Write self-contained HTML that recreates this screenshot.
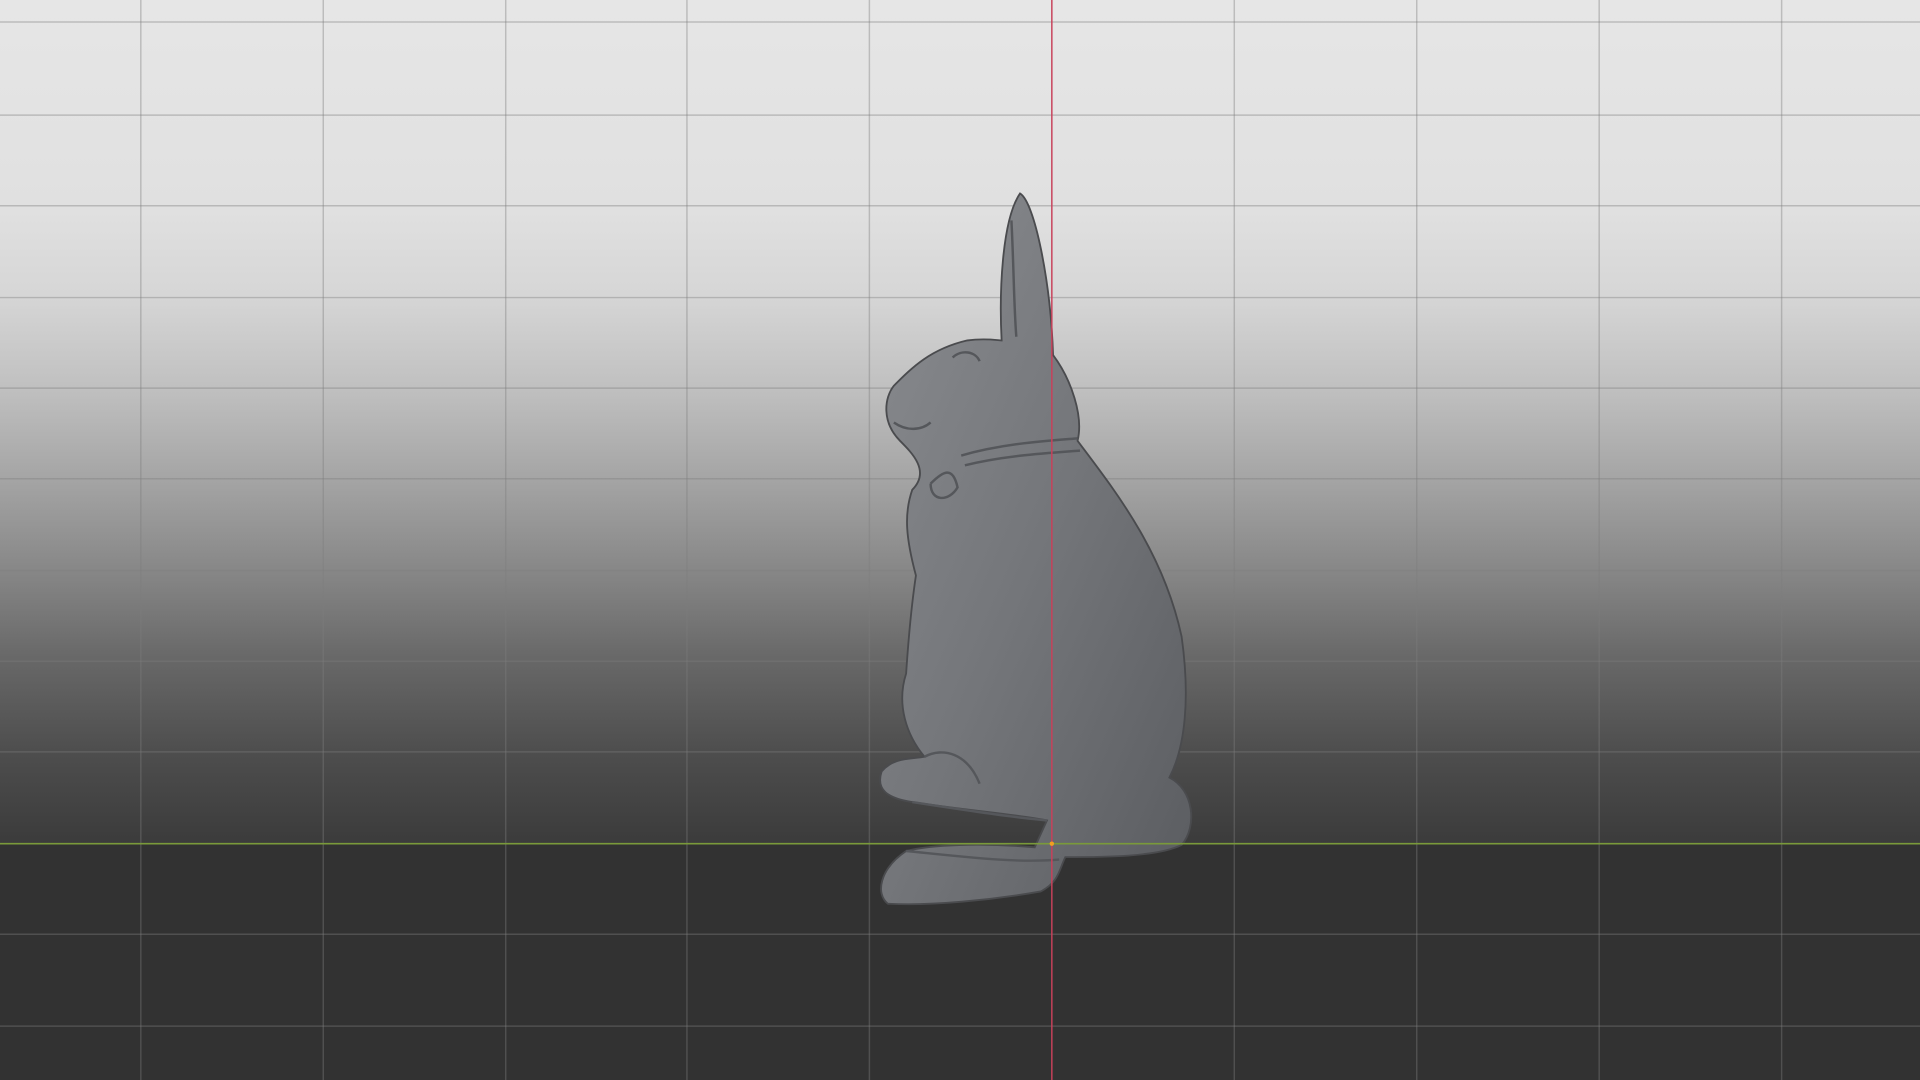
<!DOCTYPE html>
<html><head><meta charset="utf-8"><style>
html,body{margin:0;padding:0;width:1920px;height:1080px;overflow:hidden;background:#333}
svg{display:block}
</style></head><body>
<svg width="1920" height="1080" viewBox="0 0 1568 882">
<defs>
<linearGradient id="bg" x1="0" y1="0" x2="0" y2="689" gradientUnits="userSpaceOnUse">
<stop offset="0" stop-color="#e6e6e6"/>
<stop offset="0.25" stop-color="#e0e0e0"/>
<stop offset="0.35" stop-color="#d6d6d6"/>
<stop offset="0.46" stop-color="#c0c0c0"/>
<stop offset="0.57" stop-color="#a4a4a4"/>
<stop offset="0.68" stop-color="#868686"/>
<stop offset="0.78" stop-color="#686868"/>
<stop offset="0.89" stop-color="#4e4e4e"/>
<stop offset="1" stop-color="#3b3b3b"/>
</linearGradient>
<linearGradient id="rb" x1="0" y1="0" x2="1" y2="1">
<stop offset="0" stop-color="#8a8c90"/>
<stop offset="0.5" stop-color="#74767a"/>
<stop offset="1" stop-color="#5a5c60"/>
</linearGradient>
</defs>
<rect width="1568" height="882" fill="#323232"/>
<rect width="1568" height="689" fill="url(#bg)"/>
<g stroke="rgba(125,125,125,0.4)" stroke-width="1.2">
<line x1="115" y1="0" x2="115" y2="882"/><line x1="264" y1="0" x2="264" y2="882"/>
<line x1="413" y1="0" x2="413" y2="882"/><line x1="561" y1="0" x2="561" y2="882"/>
<line x1="710" y1="0" x2="710" y2="882"/><line x1="1008" y1="0" x2="1008" y2="882"/>
<line x1="1157" y1="0" x2="1157" y2="882"/><line x1="1306" y1="0" x2="1306" y2="882"/>
<line x1="1455" y1="0" x2="1455" y2="882"/>
<line x1="0" y1="18" x2="1568" y2="18"/><line x1="0" y1="94" x2="1568" y2="94"/>
<line x1="0" y1="168" x2="1568" y2="168"/><line x1="0" y1="243" x2="1568" y2="243"/>
<line x1="0" y1="317" x2="1568" y2="317"/><line x1="0" y1="391" x2="1568" y2="391"/>
<line x1="0" y1="466" x2="1568" y2="466"/><line x1="0" y1="540" x2="1568" y2="540"/>
<line x1="0" y1="614" x2="1568" y2="614"/><line x1="0" y1="763" x2="1568" y2="763"/>
<line x1="0" y1="838" x2="1568" y2="838"/>
</g>
<path d="M833,158 C845,165 858,230 860,290 C875,310 885,340 880,360 C910,400 950,450 965,520 C972,570 968,610 955,635 C975,645 978,675 965,690 C945,700 900,700 870,700 C865,710 865,720 850,728 C810,735 760,740 725,738 C715,730 718,710 740,695 C760,690 800,688 845,692 L855,670 C830,665 790,662 745,655 C725,652 715,645 720,630 C730,618 745,620 755,618 C740,600 732,575 740,550 C742,520 745,490 748,470 C740,440 738,420 745,400 C760,385 745,370 735,360 C720,345 722,325 730,315 C745,300 760,285 790,278 C805,276 815,278 818,278 C816,240 818,180 833,158 Z" fill="url(#rb)" stroke="#4a4b4e" stroke-width="1.5"/>
<g fill="none" stroke="#55575b" stroke-width="2">
<path d="M778,292 C785,285 797,287 800,295"/>
<path d="M785,372 C820,362 855,360 880,358"/>
<path d="M788,380 C820,372 855,370 882,368"/>
<path d="M826,180 C828,220 828,250 830,275"/>
<path d="M755,618 C770,610 790,615 800,640"/>
<path d="M745,655 C790,662 830,668 855,670"/>
<path d="M740,695 C790,700 830,705 865,702"/>
<path d="M760,395 C770,385 778,380 782,398 C775,410 760,410 760,395"/>
<path d="M730,345 C740,352 752,352 760,345"/>
</g>
<line x1="0" y1="689" x2="1568" y2="689" stroke="#7a9a3a" stroke-width="1.3"/>
<line x1="859" y1="0" x2="859" y2="882" stroke="#c8415a" stroke-width="1.2"/>
<circle cx="859" cy="689" r="1.8" fill="#f0a020"/>
</svg>
</body></html>
